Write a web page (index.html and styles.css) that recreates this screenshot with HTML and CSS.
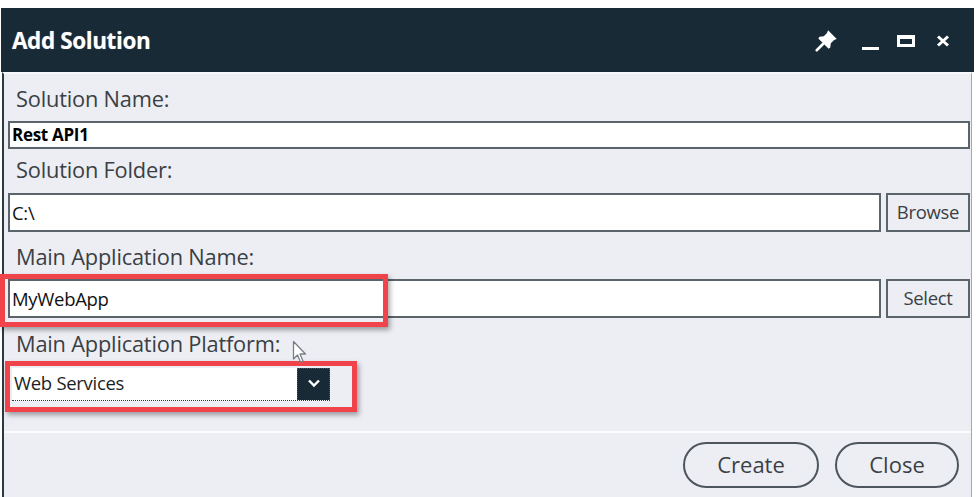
FILE: index.html
```html
<!DOCTYPE html>
<html>
<head>
<meta charset="utf-8">
<link rel="stylesheet" href="styles.css">
</head>
<body>
<div class="window">
  <div class="titlebar">
    <div class="title">Add Solution</div>
    <div class="controls">
      <svg class="pin" width="26" height="26" viewBox="0 0 24 24">
        <path d="M13 3 L21 11 L18.5 12 L15.5 15 L15 19 L13.5 20 L4 10.5 L5 9 L9 8.5 L12 5.5 Z" fill="#ffffff"/>
        <path d="M8.5 15.5 L2.5 21.5" stroke="#ffffff" stroke-width="2.4" stroke-linecap="round"/>
      </svg>
      <span class="minimize"></span>
      <span class="maximize"></span>
      <svg class="close-x" width="14" height="12" viewBox="0 0 14 12">
        <path d="M2 1.5 L12 10.5 M12 1.5 L2 10.5" stroke="#ffffff" stroke-width="3"/>
      </svg>
    </div>
  </div>
  <div class="content">
    <div class="form">
      <div class="label l1">Solution Name:</div>
      <div class="input input-bold">Rest API1</div>
      <div class="label l2">Solution Folder:</div>
      <div class="row">
        <div class="input tall">C:\</div>
        <div class="btn">Browse</div>
      </div>
      <div class="label l3">Main Application Name:</div>
      <div class="row">
        <div class="input tall">MyWebApp</div>
        <div class="btn">Select</div>
      </div>
      <div class="label l4">Main Application Platform:</div>
      <div class="select">
        <span class="select-text">Web Services</span>
        <span class="select-toggle">
          <svg width="14" height="10" viewBox="0 0 14 10"><path d="M2 2.5 L7 7.5 L12 2.5" fill="none" stroke="#ffffff" stroke-width="2.4"/></svg>
        </span>
      </div>
    </div>
    <div class="footer">
      <div class="pill">Create</div>
      <div class="pill">Close</div>
    </div>
  </div>
  <div class="mark mark1"></div>
  <div class="mark mark2"></div>
  <svg class="cursor" width="18" height="26" viewBox="0 0 18 26">
    <path d="M1.5 1.5 L1.5 19 L5.5 15 L8.5 22 L11 21 L8 14 L13.5 14 Z" fill="#ffffff" stroke="#7a7f85" stroke-width="1.3" stroke-linejoin="round"/>
  </svg>
</div>
</body>
</html>
```

FILE: styles.css
```css
html, body {
  margin: 0;
  padding: 0;
  background: #ffffff;
}

body {
  font-family: "Open Sans", "Noto Sans", "Liberation Sans", sans-serif;
  width: 976px;
  height: 497px;
  overflow: hidden;
}

.window {
  position: relative;
  padding-top: 8px;
  height: 489px;
  display: flex;
  flex-direction: column;
}

.titlebar {
  margin-left: 1px;
  width: 973px;
  height: 64px;
  background: #192a37;
  display: flex;
  align-items: center;
  justify-content: space-between;
  box-sizing: border-box;
  padding: 0 24px 0 11px;
}

.title {
  color: #ffffff;
  font-weight: 700;
  font-size: 22.5px;
  letter-spacing: -0.4px;
  padding-top: 1px;
  text-shadow: 0 0 1px rgba(255,255,255,0.4);
}

.controls {
  display: flex;
  align-items: center;
  height: 30px;
  padding-top: 2px;
}

.pin {
  margin-right: 22px;
  margin-top: -3px;
}

.minimize {
  width: 17px;
  height: 3px;
  background: #ffffff;
  margin-right: 18px;
  margin-top: 15px;
}

.maximize {
  width: 18px;
  height: 12px;
  box-sizing: border-box;
  border: 3px solid #ffffff;
  border-top-width: 4px;
  margin-right: 21px;
}

.close-x {
  display: block;
}

.content {
  flex: 1;
  width: 970px;
  margin-left: 2px;
  box-sizing: border-box;
  border-left: 2px solid #2c3943;
  border-right: 1px solid #a3a9b0;
  border-top: 2px solid #f7f8fb;
  background: #eceef4;
  display: flex;
  flex-direction: column;
}

.form {
  padding: 0 1px 0 4px;
  height: 357px;
  border-bottom: 2px solid #fafbfc;
  display: flex;
  flex-direction: column;
}

.label {
  font-size: 21.8px;
  color: #3b3f44;
  line-height: 28px;
  padding-left: 8px;
  letter-spacing: -0.2px;
}

.l1 { margin: 11px 0 8px; }
.l2 { margin: 7px 0 9px; }
.l3 { margin: 11px 0 8px; }
.l4 { margin: 12px 0 10px; }

.input {
  height: 28px;
  box-sizing: border-box;
  background: #ffffff;
  border: 2px solid #5b636b;
  font-size: 17px;
  line-height: 24px;
  padding-left: 2px;
  color: #111111;
  letter-spacing: -0.3px;
}

.input-bold {
  font-weight: 700;
  color: #000000;
}

.row {
  display: flex;
  gap: 5px;
  height: 39px;
}

.input.tall {
  flex: 1;
  height: 39px;
  line-height: 35px;
  font-size: 18.5px;
}

.btn {
  width: 84px;
  box-sizing: border-box;
  border: 2px solid #5b636b;
  background: #eceef4;
  color: #3b3f44;
  font-size: 18.5px;
  letter-spacing: -0.3px;
  display: flex;
  align-items: center;
  justify-content: center;
  padding-bottom: 3px;
}

.select {
  margin-left: 4px;
  width: 318px;
  height: 33px;
  display: flex;
  background: #ffffff;
  border-bottom: 1px dotted #333333;
  box-sizing: border-box;
}

.select-text {
  flex: 1;
  font-size: 18.5px;
  line-height: 30px;
  padding-left: 2px;
  color: #1b1f24;
  letter-spacing: -0.3px;
}

.select-toggle {
  width: 33px;
  background: #192a37;
  border: 1px dotted #555555;
  border-bottom: none;
  box-sizing: border-box;
  display: flex;
  align-items: center;
  justify-content: center;
  padding-bottom: 4px;
}

.select-toggle svg {
  display: block;
}

.footer {
  flex: 1;
  display: flex;
  justify-content: flex-end;
  align-items: flex-start;
  gap: 16px;
  padding: 9px 12px 0 0;
}

.pill {
  height: 46px;
  box-sizing: border-box;
  border: 2px solid #4e555c;
  border-radius: 23px;
  font-size: 22px;
  color: #3b3f44;
  display: flex;
  align-items: center;
  justify-content: center;
  padding-bottom: 2px;
}

.pill:first-child { width: 136px; }
.pill:last-child { width: 124px; }

.mark {
  position: absolute;
  border: 5px solid #f0434a;
  box-sizing: border-box;
  box-shadow: 2px 3px 5px rgba(0, 0, 0, 0.35);
}

.mark1 {
  left: 0;
  top: 274px;
  width: 388px;
  height: 53px;
}

.mark2 {
  left: 5px;
  top: 361px;
  width: 352px;
  height: 51px;
}

.cursor {
  position: absolute;
  left: 292px;
  top: 340px;
}
```
